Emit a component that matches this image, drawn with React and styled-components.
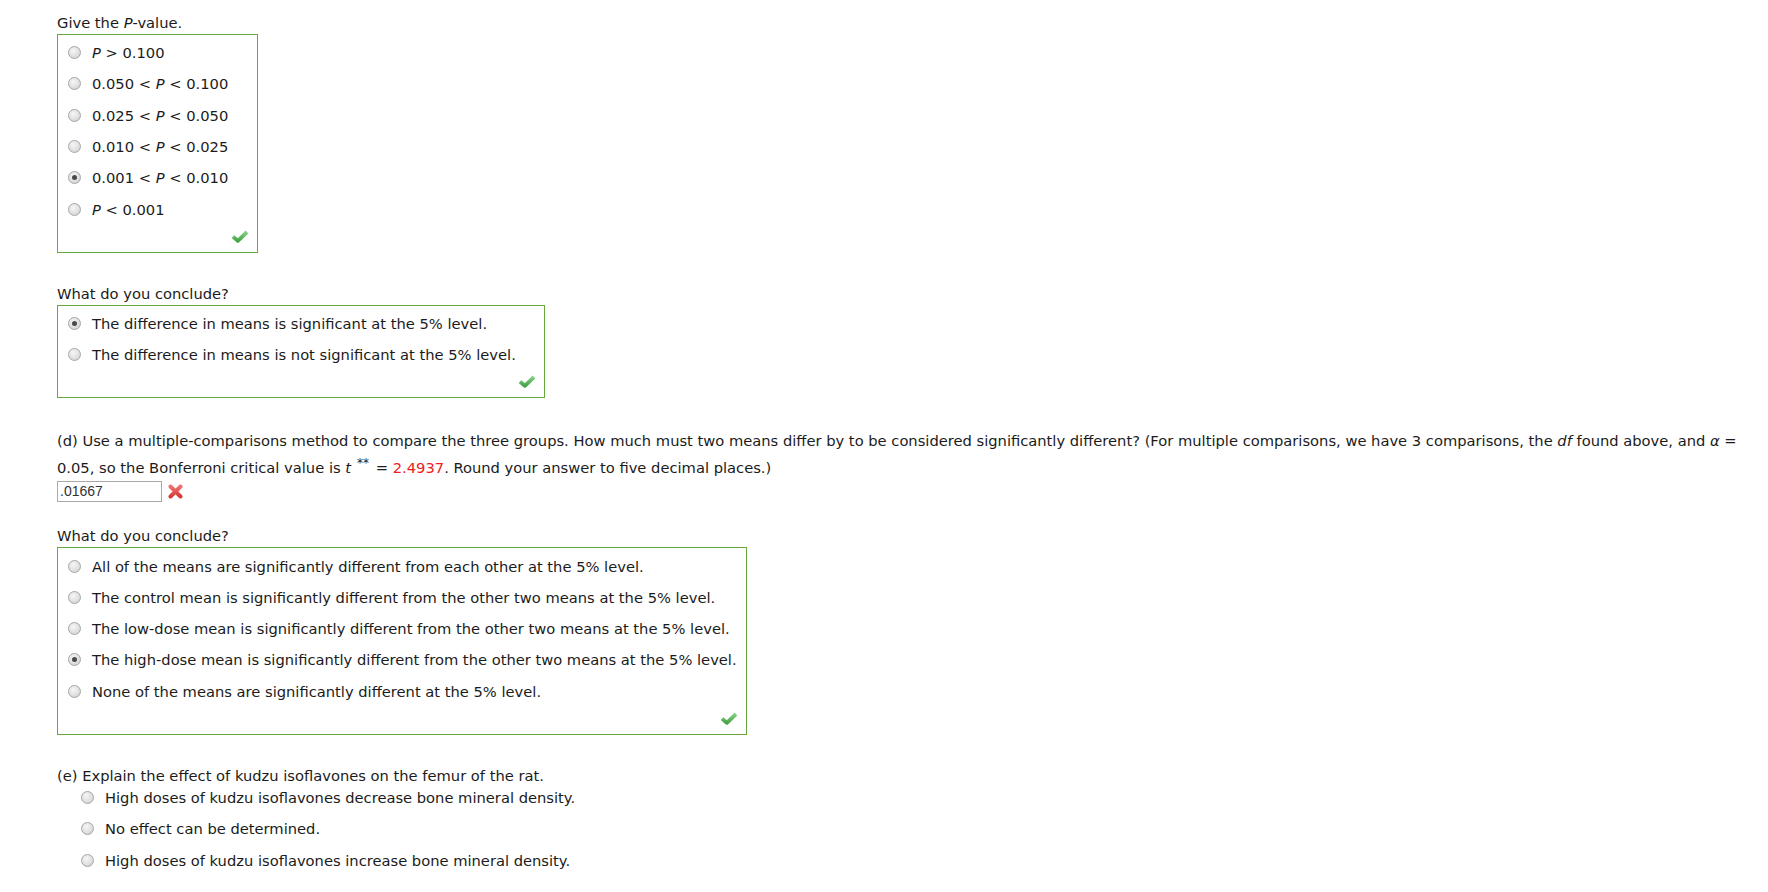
import styled, { createGlobalStyle } from "styled-components";

const GlobalStyle = createGlobalStyle`
  body {
    margin: 0;
    background: #fff;
  }
`;

const Page = styled.div`
  padding: 14px 8px 24px 57px;
  font-family: Verdana, "DejaVu Sans", sans-serif;
  font-size: 14.7px;
  color: #1b1b1b;
  display: flex;
  flex-direction: column;
  align-items: flex-start;
`;

const Label = styled.div`
  line-height: 17px;
  margin-top: ${(p) => p.$top || 0}px;
  margin-bottom: 3px;
`;

const Box = styled.div`
  box-sizing: border-box;
  width: ${(p) => p.$w}px;
  border: 1px solid #68a73c;
  padding: 2px 8px 10px 10px;
  display: flex;
  flex-direction: column;
`;

const Option = styled.div`
  height: 31.3px;
  display: flex;
  align-items: center;
  gap: 11px;
  white-space: nowrap;
`;

const PlainList = styled.div`
  margin-top: -5px;
  padding-left: 24px;
  display: flex;
  flex-direction: column;
`;

const Radio = styled.span`
  flex: none;
  box-sizing: border-box;
  width: 13px;
  height: 13px;
  border-radius: 50%;
  border: 1px solid #a6a6a6;
  background: radial-gradient(circle at 40% 35%, #f6f6f6 0%, #dedede 60%, #c8c8c8 100%);
  display: flex;
  align-items: center;
  justify-content: center;

  &::after {
    content: "";
    display: ${(p) => (p.$checked ? "block" : "none")};
    width: 5px;
    height: 5px;
    border-radius: 50%;
    background: #4a4a4a;
  }
`;

const Footer = styled.div`
  margin-top: 5px;
  height: 12px;
  display: flex;
  justify-content: flex-end;
`;

const Para = styled.p`
  margin: 29px 0 0;
  line-height: 27px;
  max-width: 1703px;
`;

const Sup = styled.sup`
  font-size: 12px;
  margin-left: 6px;
  margin-right: 2px;
  vertical-align: 6px;
  line-height: 0;
`;

const Red = styled.span`
  color: #f02020;
`;

const AnswerRow = styled.div`
  display: flex;
  align-items: center;
  gap: 6px;
`;

const Input = styled.div`
  box-sizing: border-box;
  width: 105px;
  height: 21px;
  border: 1px solid #a9a9a9;
  padding: 0 2px;
  font-family: "Liberation Sans", Arial, sans-serif;
  font-size: 14px;
  line-height: 19px;
  color: #333;
`;

const CheckMark = () => (
  <svg width="18" height="13" viewBox="0 0 18 13">
    <defs>
      <linearGradient id="chk" x1="0" y1="0" x2="0" y2="1">
        <stop offset="0" stopColor="#86d186" />
        <stop offset="1" stopColor="#47a447" />
      </linearGradient>
    </defs>
    <path
      d="M2 6.6 L6.8 10.8 L16 2"
      fill="none"
      stroke="url(#chk)"
      strokeWidth="3.9"
      strokeLinejoin="round"
    />
  </svg>
);

const CrossMark = () => (
  <svg width="15" height="15" viewBox="0 0 15 15">
    <defs>
      <linearGradient id="crs" x1="0" y1="0" x2="0" y2="1">
        <stop offset="0" stopColor="#f07070" />
        <stop offset="1" stopColor="#d83a3a" />
      </linearGradient>
    </defs>
    <path
      d="M2.5 2.5 L12.5 12.5 M12.5 2.5 L2.5 12.5"
      stroke="url(#crs)"
      strokeWidth="4"
      strokeLinecap="round"
    />
  </svg>
);

const pOptions = [
  <><i>P</i> &gt; 0.100</>,
  <>0.050 &lt; <i>P</i> &lt; 0.100</>,
  <>0.025 &lt; <i>P</i> &lt; 0.050</>,
  <>0.010 &lt; <i>P</i> &lt; 0.025</>,
  <>0.001 &lt; <i>P</i> &lt; 0.010</>,
  <><i>P</i> &lt; 0.001</>,
];

const conclude1 = [
  "The difference in means is significant at the 5% level.",
  "The difference in means is not significant at the 5% level.",
];

const conclude2 = [
  "All of the means are significantly different from each other at the 5% level.",
  "The control mean is significantly different from the other two means at the 5% level.",
  "The low-dose mean is significantly different from the other two means at the 5% level.",
  "The high-dose mean is significantly different from the other two means at the 5% level.",
  "None of the means are significantly different at the 5% level.",
];

const effects = [
  "High doses of kudzu isoflavones decrease bone mineral density.",
  "No effect can be determined.",
  "High doses of kudzu isoflavones increase bone mineral density.",
];

const Choices = ({ items, selected }) =>
  items.map((item, index) => (
    <Option key={index}>
      <Radio $checked={index === selected} />
      <span>{item}</span>
    </Option>
  ));

export default function App() {
  return (
    <>
      <GlobalStyle />
      <Page>
        <Label>
          Give the <i>P</i>-value.
        </Label>
        <Box $w={201}>
          <Choices items={pOptions} selected={4} />
          <Footer>
            <CheckMark />
          </Footer>
        </Box>

        <Label $top={32}>What do you conclude?</Label>
        <Box $w={488}>
          <Choices items={conclude1} selected={0} />
          <Footer>
            <CheckMark />
          </Footer>
        </Box>

        <Para>
          (d) Use a multiple-comparisons method to compare the three groups. How much must two
          means differ by to be considered significantly different? (For multiple comparisons, we
          have 3 comparisons, the <i>df</i> found above, and <i>α</i> = 0.05, so the Bonferroni
          critical value is <i>t</i>
          <Sup>**</Sup> = <Red>2.4937</Red>. Round your answer to five decimal places.)
        </Para>
        <AnswerRow>
          <Input>.01667</Input>
          <CrossMark />
        </AnswerRow>

        <Label $top={25}>What do you conclude?</Label>
        <Box $w={690}>
          <Choices items={conclude2} selected={3} />
          <Footer>
            <CheckMark />
          </Footer>
        </Box>

        <Label $top={32}>(e) Explain the effect of kudzu isoflavones on the femur of the rat.</Label>
        <PlainList>
          <Choices items={effects} selected={-1} />
        </PlainList>
      </Page>
    </>
  );
}
